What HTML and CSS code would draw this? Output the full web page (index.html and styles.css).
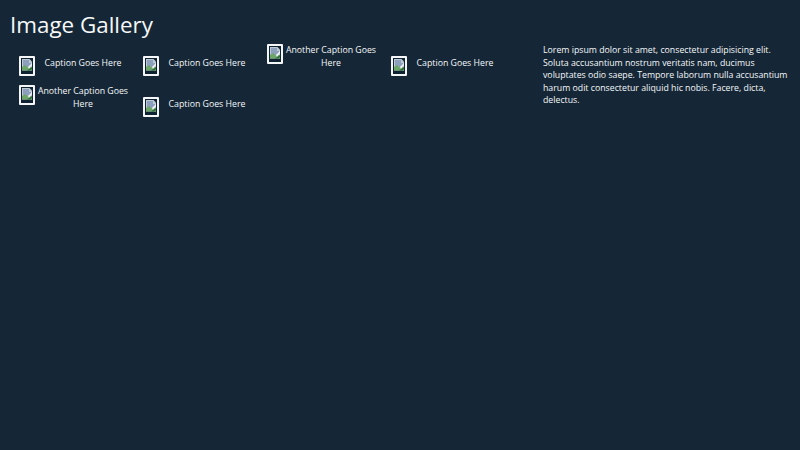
FILE: index.html
```html
<!DOCTYPE html>
<html lang="en">
<head>
<meta charset="utf-8">
<title>Image Gallery</title>
<link rel="stylesheet" href="styles.css">
</head>
<body>
<svg class="defs" width="0" height="0" aria-hidden="true">
  <symbol id="broken" viewBox="0 0 12 16">
    <rect width="12" height="16" fill="#0f2232"/>
    <path d="M1 1H8.500L11 3.500V12.500H1Z" fill="#bcc8d2"/>
    <path d="M2 2H8V5H10V7L7 9H2Z" fill="#8c9fbc"/>
    <path d="M1 12.500V9L4 7L7 9.500L9 8L11 10V12.500Z" fill="#6ea66a"/>
    <path d="M7 9L11 5V7L8 11Z" fill="#eef2f5"/>
    <path d="M6 12.500L11 9V11L9 12.500Z" fill="#2f6b3a"/>
  </symbol>
</svg>
<h1 class="title">Image Gallery</h1>
<main class="layout">
  <section class="gallery">
    <figure class="item single"><svg class="thumb"><use href="#broken"/></svg><figcaption class="caption">Caption Goes Here</figcaption></figure>
    <figure class="item single"><svg class="thumb"><use href="#broken"/></svg><figcaption class="caption">Caption Goes Here</figcaption></figure>
    <figure class="item"><svg class="thumb"><use href="#broken"/></svg><figcaption class="caption">Another Caption Goes Here</figcaption></figure>
    <figure class="item single"><svg class="thumb"><use href="#broken"/></svg><figcaption class="caption">Caption Goes Here</figcaption></figure>
    <figure class="item"><svg class="thumb"><use href="#broken"/></svg><figcaption class="caption">Another Caption Goes Here</figcaption></figure>
    <figure class="item single"><svg class="thumb"><use href="#broken"/></svg><figcaption class="caption">Caption Goes Here</figcaption></figure>
  </section>
  <p class="intro">Lorem ipsum dolor sit amet, consectetur adipisicing elit. Soluta accusantium nostrum veritatis nam, ducimus voluptates odio saepe. Tempore laborum nulla accusantium harum odit consectetur aliquid hic nobis. Facere, dicta, delectus.</p>
</main>
</body>
</html>
```
FILE: styles.css
```css
* {
  box-sizing: border-box;
}

html,
body {
  height: 100%;
}

body {
  margin: 0;
  background: #152737;
  color: #f6f8f9;
  font-family: "Open Sans", sans-serif;
  font-size: 8.75px;
  line-height: 12.5px;
}

.defs {
  position: absolute;
}

.title {
  margin: 0;
  padding: 9px 10px 3px;
  font-size: 22.4px;
  font-weight: 400;
  line-height: 31px;
  color: #f6f8f9;
}

.layout {
  display: flex;
}

.gallery {
  display: grid;
  grid-template-columns: repeat(4, 124px);
  grid-auto-rows: 41px;
  align-content: start;
  width: 533px;
  padding: 1px 0 0 19px;
}

.item {
  display: flex;
  align-items: flex-start;
  margin: 0;
}

.single {
  padding-top: 12px;
}

.single .caption {
  margin-top: 1px;
}

.thumb {
  flex: none;
  width: 16px;
  height: 20px;
  border: 2px solid #f4f6f8;
  border-radius: 1px;
}

.caption {
  width: 96px;
  text-align: center;
}

.intro {
  width: 267px;
  margin: 1px 0 0;
  padding: 0 10px;
}
```
